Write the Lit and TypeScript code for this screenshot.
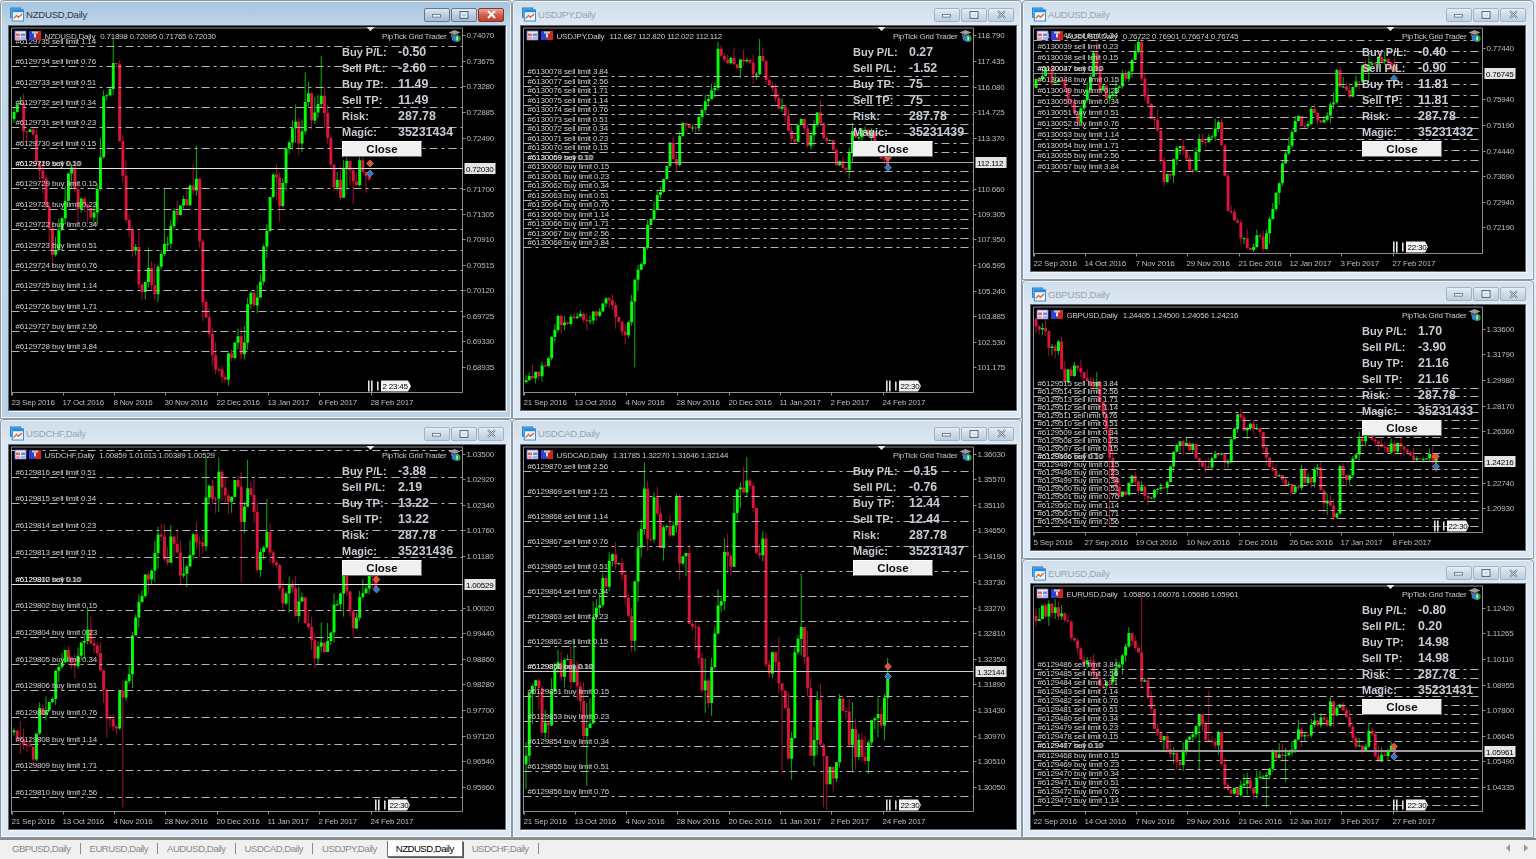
import { LitElement, html, css, svg } from "lit";
import { customElement, property } from "lit/decorators.js";

interface Chart {
  sym: string; ohlc: string; active?: boolean;
  ox: number; oy: number; w: number; h: number;
  keys: string; kx: number; ky: number; ks: number; amp: number; wick: number; seed: number;
  spikes: number[][]; endX: number;
  prices: [string, number][]; cur: [string, number]; curColor: string;
  times: string[];
  first: number; step: number; curIdx: number; labels: string[];
  info: string[]; tagX: number; tagText: string; tri?: boolean;
}

const t1 = "21 Sep 2016,13 Oct 2016,4 Nov 2016,28 Nov 2016,20 Dec 2016,11 Jan 2017,2 Feb 2017,24 Feb 2017".split(",");
const t2 = "22 Sep 2016,14 Oct 2016,7 Nov 2016,29 Nov 2016,21 Dec 2016,12 Jan 2017,3 Feb 2017,27 Feb 2017".split(",");
const pl = (s: string): [string, number][] => s.split(" ").map((p) => { const [a, b] = p.split("@"); return [a, +b] as [string, number]; });

const CHARTS: Record<string, Chart> = {
  NZD: {
    sym: "NZDUSD", ohlc: "0.71898 0.72095 0.71765 0.72030", active: true, curColor: "#e4e4e4",
    ox: 9, oy: 27, w: 496, h: 384, kx: 0, ky: 20, ks: 3, amp: 13, wick: 15, seed: 11, endX: 370,
    keys: "38,300 55,250 80,350 100,350 110,470 130,520 150,680 165,720 190,600 205,450 225,500 245,580 270,580 295,500 305,300 320,210 342,120 352,200 360,400 370,500 380,620 400,680 415,780 430,850 445,750 465,820 480,700 500,640 520,600 545,560 575,480 592,500 600,700 612,880 630,1000 650,1060 665,1090 690,1020 700,950 735,980 745,830 765,900 785,750 800,620 822,430 840,560 860,400 880,280 895,360 920,250 945,280 965,230 985,400 995,480 1025,500 1040,440 1060,520 1080,440 1110,480",
    spikes: [[965, 110], [915, 160], [340, 60], [590, 380], [495, 510]],
    prices: pl("0.74070@36 0.73675@62 0.73280@87 0.72885@113 0.72490@139 0.71700@190 0.71305@215 0.70910@240 0.70515@266 0.70120@291 0.69725@317 0.69330@342 0.68935@368"),
    cur: ["0.72030", 168.5],
    times: "23 Sep 2016,17 Oct 2016,8 Nov 2016,30 Nov 2016,22 Dec 2016,13 Jan 2017,6 Feb 2017,28 Feb 2017".split(","),
    first: 47, step: 20.35, curIdx: 6,
    labels: ["6129735 sell limit 1.14", "6129734 sell limit 0.76", "6129733 sell limit 0.51", "6129732 sell limit 0.34", "6129731 sell limit 0.23", "6129730 sell limit 0.15", "6129719 buy 0.10|6129720 sell 0.10", "6129729 buy limit 0.15", "6129721 buy limit 0.23", "6129722 buy limit 0.34", "6129723 buy limit 0.51", "6129724 buy limit 0.76", "6129725 buy limit 1.14", "6129726 buy limit 1.71", "6129727 buy limit 2.56", "6129728 buy limit 3.84"],
    info: ["-0.50", "-2.60", "11.49", "11.49", "287.78", "35231434"], tagX: 381, tagText: "2 23:45", tri: true,
  },
  JPY: {
    sym: "USDJPY", ohlc: "112.687 112.820 112.022 112.112", curColor: "#a4a4a4",
    ox: 520, oy: 27, w: 495, h: 384, kx: 515, ky: 20, ks: 3, amp: 5.5, wick: 8, seed: 22, endX: 887,
    keys: "22,1090 50,1080 90,1040 108,950 125,900 150,920 175,880 215,910 240,880 270,830 290,850 310,920 325,945 340,880 355,800 375,730 390,640 415,550 440,500 460,380 480,430 500,300 520,330 540,330 570,250 595,200 607,90 625,130 660,130 700,140 715,170 735,105 750,200 770,200 790,260 810,310 835,380 850,280 875,380 905,260 925,380 945,370 965,440 990,440 1010,340 1040,340 1070,350 1100,420 1115,430",
    spikes: [[355, 1045], [22, 1020], [730, 60]],
    prices: pl("118.790@36 117.435@62 116.080@88 114.725@113 113.370@139 110.660@190 109.305@215 107.950@240 106.595@266 105.240@292 103.885@317 102.530@343 101.175@368"),
    cur: ["112.112", 162.5], times: t1,
    first: 77, step: 9.5, curIdx: 9,
    labels: ["6130078 sell limit 3.84", "6130077 sell limit 2.56", "6130076 sell limit 1.71", "6130075 sell limit 1.14", "6130074 sell limit 0.76", "6130073 sell limit 0.51", "6130072 sell limit 0.34", "6130071 sell limit 0.23", "6130070 sell limit 0.15", "6130069 buy 0.10|6130059 sell 0.10", "6130060 buy limit 0.15", "6130061 buy limit 0.23", "6130062 buy limit 0.34", "6130063 buy limit 0.51", "6130064 buy limit 0.76", "6130065 buy limit 1.14", "6130066 buy limit 1.71", "6130067 buy limit 2.56", "6130068 buy limit 3.84"],
    info: ["0.27", "-1.52", "75", "75", "287.78", "35231439"], tagX: 898, tagText: "22:30", tri: true,
  },
  CHF: {
    sym: "USDCHF", ohlc: "1.00859 1.01013 1.00389 1.00529", curColor: "#e8e8e8",
    ox: 9, oy: 446, w: 496, h: 384, kx: 0, ky: 440, ks: 3, amp: 12, wick: 15, seed: 33, endX: 376.5,
    keys: "38,880 55,910 75,910 100,940 120,830 140,790 155,780 170,670 190,660 215,670 240,610 270,590 295,630 310,780 325,880 345,850 370,730 390,690 400,560 415,490 430,420 460,360 470,300 490,320 500,350 520,290 550,420 570,310 590,290 605,340 620,110 640,150 660,130 680,170 710,130 725,290 745,150 765,270 770,380 790,290 810,330 830,380 850,490 870,420 885,550 905,500 945,650 965,620 985,630 1005,490 1030,440 1060,550 1080,450 1110,420 1130,430",
    spikes: [[370, 1105], [265, 505], [745, 62], [620, 55], [725, 430], [802, 180]],
    prices: pl("1.03500@455 1.02920@480 1.02340@506 1.01760@531 1.01180@557 1.00020@609 0.99440@634 0.98860@660 0.98280@685 0.97700@711 0.97120@737 0.96540@762 0.95960@788"),
    cur: ["1.00529", 585], times: t1,
    first: 451, step: 26.7, curIdx: 5,
    labels: ["", "6129816 sell limit 0.51", "6129815 sell limit 0.34", "6129814 sell limit 0.23", "6129813 sell limit 0.15", "6129800 buy 0.10|6129812 sell 0.10", "6129802 buy limit 0.15", "6129804 buy limit 0.23", "6129805 buy limit 0.34", "6129806 buy limit 0.51", "6129807 buy limit 0.76", "6129808 buy limit 1.14", "6129809 buy limit 1.71", "6129810 buy limit 2.56"],
    info: ["-3.88", "2.19", "13.22", "13.22", "287.78", "35231436"], tagX: 388, tagText: "22:30", tri: true,
  },
  CAD: {
    sym: "USDCAD", ohlc: "1.31785 1.32270 1.31646 1.32144", curColor: "#d0d0d0",
    ox: 520, oy: 446, w: 495, h: 384, kx: 515, ky: 440, ks: 3, amp: 20, wick: 20, seed: 44, endX: 887,
    keys: "22,1000 40,780 60,700 75,900 105,800 125,700 150,640 175,720 195,860 222,870 232,560 250,480 280,400 320,400 335,470 345,570 365,300 385,130 395,300 415,180 435,350 460,240 480,220 495,380 510,330 520,570 545,600 560,740 580,850 595,590 608,490 625,380 640,430 655,250 665,150 685,95 700,120 720,320 740,340 750,680 765,660 790,750 810,860 825,980 838,610 850,520 870,660 885,940 905,800 925,1000 945,970 960,1010 970,750 995,820 1005,920 1025,930 1050,920 1075,780 1095,880 1115,720",
    spikes: [[210, 1040], [855, 405], [690, 55], [385, 70], [925, 1105], [30, 1050], [800, 1005]],
    prices: pl("1.36030@455 1.35570@480 1.35110@506 1.34650@531 1.34190@557 1.33730@583 1.33270@609 1.32810@634 1.32350@660 1.31890@685 1.31430@711 1.30970@737 1.30510@762 1.30050@788"),
    cur: ["1.32144", 671.5], times: t1,
    first: 472, step: 24.98, curIdx: 8,
    labels: ["6129870 sell limit 2.56", "6129869 sell limit 1.71", "6129868 sell limit 1.14", "6129867 sell limit 0.76", "6129865 sell limit 0.51", "6129864 sell limit 0.34", "6129863 sell limit 0.23", "6129862 sell limit 0.15", "6129850 buy 0.10|6129861 sell 0.10", "6129851 buy limit 0.15", "6129853 buy limit 0.23", "6129854 buy limit 0.34", "6129855 buy limit 0.51", "6129856 buy limit 0.76"],
    info: ["-0.15", "-0.76", "12.44", "12.44", "287.78", "35231437"], tagX: 898, tagText: "22:30", tri: true,
  },
  AUD: {
    sym: "AUDUSD", ohlc: "0.76722 0.76901 0.76674 0.76745", curColor: "#8c8c8c",
    ox: 1031, oy: 27, w: 494, h: 245, kx: 1025, ky: 20, ks: 3, amp: 7.5, wick: 8, seed: 55, endX: 1394,
    keys: "25,210 60,150 85,190 105,170 130,240 160,300 185,240 205,110 225,200 260,240 290,180 325,140 340,70 350,200 370,260 385,300 400,360 415,510 430,460 465,380 495,460 520,380 550,370 570,340 585,325 600,480 610,570 640,620 665,680 695,670 720,670 735,570 760,510 780,400 800,340 820,280 840,330 860,260 895,320 920,260 935,170 960,210 980,215 1010,155 1040,130 1075,130 1095,160 1105,150",
    spikes: [],
    prices: pl("0.77440@49 0.75940@100 0.75190@126 0.74440@152 0.73690@177 0.72940@203 0.72190@228"),
    cur: ["0.76745", 74], times: t2,
    first: 41, step: 10.95, curIdx: 3,
    labels: ["6130040 sell limit 0.34", "6130039 sell limit 0.23", "6130038 sell limit 0.15", "6130037 buy 0.10|6130047 sell 0.10", "6130048 buy limit 0.15", "6130049 buy limit 0.23", "6130050 buy limit 0.34", "6130051 buy limit 0.51", "6130052 buy limit 0.76", "6130053 buy limit 1.14", "6130054 buy limit 1.71", "6130055 buy limit 2.56", "6130057 buy limit 3.84"],
    info: ["-0.40", "-0.90", "11.81", "11.81", "287.78", "35231432"], tagX: 1406, tagText: "22:30", tri: true,
  },
  GBP: {
    sym: "GBPUSD", ohlc: "1.24405 1.24500 1.24056 1.24216", curColor: "#d8d8d8",
    ox: 1031, oy: 306, w: 494, h: 245, kx: 1025, ky: 300, ks: 2.96, amp: 6, wick: 7, seed: 66, endX: 1436,
    keys: "30,60 60,110 85,150 100,140 112,240 145,210 180,245 215,260 240,350 255,500 280,600 320,530 350,570 395,580 430,520 445,440 480,430 500,440 540,510 570,470 610,470 635,350 665,390 700,370 725,490 780,540 815,570 830,520 860,560 875,480 890,590 935,650 945,490 965,540 985,470 1005,400 1040,420 1070,450 1100,430 1130,450 1160,470 1195,460 1233,470",
    spikes: [[253, 675], [905, 640]],
    prices: pl("1.33600@330 1.31790@355 1.29980@381 1.28170@407 1.26360@432 1.22740@484 1.20930@509"),
    cur: ["1.24216", 462], times: "5 Sep 2016,27 Sep 2016,19 Oct 2016,10 Nov 2016,2 Dec 2016,26 Dec 2016,17 Jan 2017,8 Feb 2017".split(","),
    first: 388.8, step: 8.12, curIdx: 9,
    labels: ["6129515 sell limit 3.84", "6129514 sell limit 2.56", "6129513 sell limit 1.71", "6129512 sell limit 1.14", "6129511 sell limit 0.76", "6129510 sell limit 0.51", "6129509 sell limit 0.34", "6129508 sell limit 0.23", "6129507 sell limit 0.15", "6129496 buy 0.10|6129506 sell 0.10", "6129497 buy limit 0.15", "6129498 buy limit 0.23", "6129499 buy limit 0.34", "6129500 buy limit 0.51", "6129501 buy limit 0.76", "6129502 buy limit 1.14", "6129503 buy limit 1.71", "6129504 buy limit 2.56"],
    info: ["1.70", "-3.90", "21.16", "21.16", "287.78", "35231433"], tagX: 1447, tagText: "22:30",
  },
  EUR: {
    sym: "EURUSD", ohlc: "1.05856 1.06076 1.05686 1.05961", curColor: "#a0a0a0",
    ox: 1031, oy: 585, w: 494, h: 245, kx: 1025, ky: 300, ks: 2.96, amp: 7, wick: 8, seed: 77, endX: 1394,
    keys: "25,940 50,920 80,920 120,950 150,1010 165,1060 190,1080 220,1140 245,1140 270,1100 290,1040 320,990 335,1040 350,1120 370,1170 385,1250 410,1300 425,1330 455,1380 490,1310 520,1240 550,1320 580,1300 600,1430 630,1470 665,1430 690,1450 705,1400 720,1420 745,1340 770,1370 800,1330 820,1260 845,1310 865,1230 900,1270 915,1210 950,1220 975,1280 1005,1330 1035,1290 1060,1370 1085,1350 1105,1330",
    spikes: [[350, 880], [550, 1160], [520, 1395], [722, 1505], [780, 1430]],
    prices: pl("1.12420@609 1.11265@634 1.10110@660 1.08955@686 1.07800@711 1.06645@737 1.05490@762 1.04335@788"),
    cur: ["1.05961", 752], times: t2,
    first: 670, step: 9.05, curIdx: 9,
    labels: ["6129486 sell limit 3.84", "6129485 sell limit 2.56", "6129484 sell limit 1.71", "6129483 sell limit 1.14", "6129482 sell limit 0.76", "6129481 sell limit 0.51", "6129480 sell limit 0.34", "6129479 sell limit 0.23", "6129478 sell limit 0.15", "6129467 buy 0.10|6129477 sell 0.10", "6129468 buy limit 0.15", "6129469 buy limit 0.23", "6129470 buy limit 0.34", "6129471 buy limit 0.51", "6129472 buy limit 0.76", "6129473 buy limit 1.14"],
    info: ["-0.80", "0.20", "14.98", "14.98", "287.78", "35231431"], tagX: 1406, tagText: "22:30", tri: true,
  },
};

const INFO_LABELS = ["Buy P/L:", "Sell P/L:", "Buy TP:", "Sell TP:", "Risk:", "Magic:"];

function rngFrom(seed: number) {
  let a = seed * 2654435 + 1;
  return () => {
    a |= 0; a = (a + 0x6d2b79f5) | 0;
    let t = Math.imul(a ^ (a >>> 15), 1 | a);
    t = (t + Math.imul(t ^ (t >>> 7), 61 | t)) ^ t;
    return ((t ^ (t >>> 14)) >>> 0) / 4294967296;
  };
}

function candlePaths(c: Chart) {
  const rnd = rngFrom(c.seed);
  const pts = c.keys.split(" ").map((p) => {
    const [x, y] = p.split(",").map(Number);
    return [c.kx + x / 3, c.ky + y / c.ks];
  });
  const at = (x: number) => {
    if (x <= pts[0][0]) return pts[0][1];
    for (let i = 1; i < pts.length; i++) {
      if (x <= pts[i][0]) {
        const f = (x - pts[i - 1][0]) / (pts[i][0] - pts[i - 1][0]);
        return pts[i - 1][1] + f * (pts[i][1] - pts[i - 1][1]);
      }
    }
    return pts[pts.length - 1][1];
  };
  const left = c.ox + 3;
  const top = c.oy + 3;
  const bottom = c.oy + c.h - 19;
  const spikes = c.spikes.map(([x, y]) => [c.kx + x / 3, c.ky + y / c.ks]);
  let g = "", r = "", gw = "", rw = "";
  let prev = at(left);
  const step = 3.2;
  for (let x = left + 0.6; x <= c.endX + 0.1; x += step) {
    const cl = at(x + 1.2) + (rnd() - 0.5) * 2 * c.amp;
    const o = prev;
    const up = cl < o;
    let yt = Math.min(o, cl);
    let yb = Math.max(o, cl);
    if (yb - yt < 1) yb = yt + 1;
    let hi = yt - rnd() * rnd() * c.wick * 1.6;
    let lo = yb + rnd() * rnd() * c.wick * 1.6;
    for (const [sx, sy] of spikes) {
      if (Math.abs(sx - (x + 1.2)) <= 1.6) {
        if (sy < hi) hi = sy;
        if (sy > lo) lo = sy;
      }
    }
    hi = Math.max(hi, top); lo = Math.min(lo, bottom);
    yt = Math.max(yt, top); yb = Math.min(yb, bottom);
    const wick = `M${(x + 1.4).toFixed(1)} ${hi.toFixed(1)}V${lo.toFixed(1)}`;
    const body = `M${x.toFixed(1)} ${yt.toFixed(1)}h2.9V${yb.toFixed(1)}h-2.9z`;
    if (up) { gw += wick; g += body; } else { rw += wick; r += body; }
    prev = cl;
  }
  return { g, r, gw, rw };
}

@customElement("mt-window")
class MtWindow extends LitElement {
  @property({ attribute: false }) chart!: Chart;

  static styles = css`
    :host { display: block; height: 100%; }
    .win {
      height: 100%; box-sizing: border-box; display: flex; flex-direction: column;
      background: linear-gradient(#cfdeeb, #dfe9f3 27px, #dce8f3);
      border: 1px solid #8b98a3; border-radius: 4px 4px 0 0;
      box-shadow: inset 0 0 0 1px #eef4f9;
    }
    .win.active { background: linear-gradient(#a6c4de, #c2d6e8 27px, #bad1e5); }
    .bar { flex: 1; display: flex; align-items: center; padding: 2px 7px 0 9px; min-height: 0; }
    .title {
      font: 9.6px "Liberation Sans", sans-serif; letter-spacing: -0.25px;
      color: #98a5b2; margin-left: 2px; white-space: nowrap;
    }
    .active .title { color: #2b3b4c; }
    .btns { margin-left: auto; display: flex; gap: 1px; }
    .btn {
      width: 26px; height: 14px; box-sizing: border-box; border: 1px solid #a4b3c1; border-radius: 2px;
      background: linear-gradient(#e6eef5, #ccdbe8 50%, #bdd0e0); display: flex; align-items: center; justify-content: center;
    }
    .active .btn { border-color: #66788a; background: linear-gradient(#dde8f2, #b9cde0 50%, #a4bcd3); }
    .active .btn.x { border-color: #7d3a30; background: linear-gradient(#eba597, #d35f4e 50%, #c23f2f); }
    .frame {
      position: relative; background: #000; flex: none; margin-bottom: 8px;
      box-shadow: 0 0 0 1px #5d6a75, 1px 1px 0 1px #f5f8fb;
    }
    svg.chart { display: block; filter: blur(0.28px); }
    .ord { font: 8px "Liberation Sans", sans-serif; letter-spacing: -0.15px; fill: #cfcfcf; }
    .hdr { font: 8px "Liberation Sans", sans-serif; letter-spacing: -0.22px; fill: #c8c8c8; }
    .axis { font: 8px "Liberation Sans", sans-serif; letter-spacing: -0.2px; fill: #bcbcbc; }
    .tag { font: 8px "Liberation Sans", sans-serif; letter-spacing: -0.2px; fill: #000; }
    .info {
      position: absolute; display: grid; grid-template-columns: 56px auto; grid-auto-rows: 16px;
      align-items: center; font: bold 11px/16px "Liberation Sans", sans-serif; color: #c6ccd4; white-space: nowrap;
      filter: blur(0.25px);
    }
    .val { font-size: 12.4px; }
    .close {
      grid-column: 1 / 3; margin-top: 1px; width: 80px; height: 16px; box-sizing: border-box; padding: 0;
      background: #f0f0f0; border: 1px solid; border-color: #fff #6e6e6e #6e6e6e #fff;
      font: bold 11.5px "Liberation Sans", sans-serif; color: #0c0c0c; text-align: center; line-height: 14px;
    }
  `;

  private winIcon() {
    return html`<svg width="14" height="15" viewBox="0 0 15 15">
      <rect x="0.5" y="0.5" width="11" height="10" fill="#5fb0ea" stroke="#1f7fd0"></rect>
      <rect x="2.5" y="2.5" width="12" height="12" fill="#eaf5fc" stroke="#2a8bd8"></rect>
      <rect x="2.5" y="2.5" width="12" height="2.5" fill="#2a8bd8"></rect>
      <path d="M4 12 L7 8.5 L9 10.5 L13 7" fill="none" stroke="#e8601c" stroke-width="1.3"></path>
    </svg>`;
  }

  private chartSvg() {
    const c = this.chart;
    const pL = c.ox + 3 - 0.5;
    const pR = c.ox + c.w - 42.5;
    const pT = c.oy + 2;
    const pB = c.oy + c.h - 17.5;
    const p = candlePaths(c);
    const lines = c.labels.map((l, i) => {
      const y = Math.round(c.first + i * c.step) + 0.5;
      const isCur = i === c.curIdx;
      return svg`
        <line x1=${pL} x2=${pR} y1=${y} y2=${y} stroke=${isCur ? "#9a9a9a" : "#b4b4b4"} stroke-dasharray=${isCur ? "none" : "8 4 3 4"}></line>
        ${l ? l.split("|").map((t) => svg`<text class="ord" x=${pL + 4} y=${y - 3}>#${t}</text>`) : ""}`;
    });
    const cy = Math.round(c.cur[1]) + 0.5;
    const tagY = pB - 12;
    return svg`<svg class="chart" width=${c.w} height=${c.h} viewBox="${c.ox} ${c.oy} ${c.w} ${c.h}">
      <path d=${p.gw} stroke="#0cae0c" stroke-width="1" fill="none"></path>
      <path d=${p.rw} stroke="#a01034" stroke-width="1" fill="none"></path>
      <path d=${p.g} fill="#00ff00"></path>
      <path d=${p.r} fill="#dc143c"></path>
      ${lines}
      <path d="M${pL} ${pT}H${pR}M${pL} ${pT}V${pB + 3}M${pL} ${pB}H${pR}M${pR} ${pT}V${pB}" stroke="#8c8c8c" fill="none"></path>
      <line x1=${pL} x2=${pR} y1=${cy} y2=${cy} stroke=${c.curColor}></line>
      ${c.times.map((t, i) => {
        const x = Math.round(pL + i * 51.3) + 0.5;
        return svg`<line x1=${x} x2=${x} y1=${pB} y2=${pB + 3} stroke="#8c8c8c"></line>
          <text class="axis" x=${x - 1} y=${pB + 12}>${t}</text>`;
      })}
      ${c.prices.map(([t, y]) => svg`
        <line x1=${pR} x2=${pR + 3} y1=${Math.round(y) + 0.5} y2=${Math.round(y) + 0.5} stroke="#8c8c8c"></line>
        <text class="axis" x=${pR + 4} y=${y + 3}>${t}</text>`)}
      <rect x=${pR + 2} y=${cy - 5.5} width="31" height="11" fill="#e4e4e4"></rect>
      <text class="tag" x=${pR + 3.5} y=${cy + 3}>${c.cur[0]}</text>

      <g transform="translate(${pL + 3.5} ${c.oy + 5})">
        <rect width="11" height="9" fill="#efe8f4" stroke="#6a6ad0" stroke-width="0.8"></rect>
        <rect x="1" y="2.5" width="4" height="2.6" fill="#d86a6a"></rect><rect x="6" y="2.5" width="4" height="2.6" fill="#6a8ae0"></rect>
        <rect x="1" y="6" width="4" height="2.2" fill="#e8a0a0"></rect><rect x="6" y="6" width="4" height="2.2" fill="#a0b4ee"></rect>
        <rect x="14" width="6" height="9" fill="#2c3fd8"></rect><rect x="20" width="6" height="9" fill="#c82820"></rect>
        <rect x="17" y="0.5" width="6" height="2" fill="#c8c8c8"></rect><rect x="19" y="2.5" width="2" height="4" fill="#dcdcdc"></rect>
      </g>
      <text class="hdr" x=${pL + 33} y=${c.oy + 12.5}>${c.sym},Daily<tspan dx="5">${c.ohlc}</tspan></text>
      ${c.tri ? svg`<path d="M${pR - 96} ${c.oy + 1}h8l-4 4z" fill="#e8e8e8"></path>` : ""}
      <text class="hdr" text-anchor="end" x=${pR - 16} y=${c.oy + 12.5}>PipTick Grid Trader</text>
      <g transform="translate(${pR - 14} ${c.oy + 3})">
        <path d="M0 3.5L6 1l6 2.5L6 6z" fill="#9a9a9a"></path>
        <path d="M2.5 5v2.5q3.5 2 7 0V5L6 6.5z" fill="#6c6c6c"></path>
        <circle cx="8.5" cy="9.5" r="3.6" fill="#22a04a"></circle>
        <circle cx="5.5" cy="9.5" r="2.4" fill="#2f7fd8"></circle>
        <rect x="8" y="7.5" width="1.2" height="4" fill="#fff"></rect>
      </g>

      <path d="M${c.endX} ${cy - 8.5}l3.4 3.5l-3.4 3.5l-3.4 -3.5z" fill="#e8502a" stroke="#f6d0c0" stroke-width="0.4"></path>
      <path d="M${c.endX} ${cy + 1.5}l3.4 3.5l-3.4 3.5l-3.4 -3.5z" fill="#2a78c8" stroke="#cfe4f6" stroke-width="0.4"></path>

      <g transform="translate(${c.tagX} ${tagY})">
        <path d=${c.tagText.length > 5 ? "M0 0h27l3 5.5l-3 5.5h-27z" : "M0 0h19l3 5.5l-3 5.5h-19z"} fill="#f2f2f2"></path>
        <text class="tag" x="1.5" y="8.3">${c.tagText}</text>
        <rect x="-4" y="1" width="1.6" height="9" fill="#dcdcdc"></rect>
        <rect x="-13" y="0" width="1.6" height="11" fill="#cfe8ee"></rect>
        <rect x="-10" y="0" width="1.6" height="11" fill="#e8e8e8"></rect>
      </g>
    </svg>`;
  }

  render() {
    const c = this.chart;
    const infoL = c.w - 163;
    return html`<div class="win ${c.active ? "active" : ""}">
      <div class="bar">
        ${this.winIcon()}
        <span class="title">${c.sym},Daily</span>
        <div class="btns">
          <div class="btn"><svg width="10" height="6" viewBox="0 0 10 6"><rect x="0.5" y="2.5" width="8" height="2.6" fill="#eef3f7" stroke="#5f6f7d" stroke-width="0.8"></rect></svg></div>
          <div class="btn"><svg width="10" height="8" viewBox="0 0 10 8"><rect x="1" y="0.5" width="8" height="7" fill="none" stroke="#5f6f7d"></rect><rect x="2.4" y="2.2" width="5.2" height="3.6" fill="none" stroke="#eef3f7"></rect></svg></div>
          <div class="btn x"><svg width="11" height="9" viewBox="0 0 11 9"><path d="M2 1l7 7M9 1l-7 7" stroke=${c.active ? "#fff" : "#6d7c8a"} stroke-width="2" fill="none"></path>${c.active ? "" : svg`<path d="M2 1l7 7M9 1l-7 7" stroke="#e8eef4" stroke-width="0.8" fill="none"></path>`}</svg></div>
        </div>
      </div>
      <div class="frame" style="width:${c.w}px;height:${c.h}px;margin-left:8px">
        ${this.chartSvg()}
        <div class="info" style="left:${infoL}px;top:18px">
          ${INFO_LABELS.map((l, i) => html`<span>${l}</span><span class="val">${c.info[i]}</span>`)}
          <div class="close">Close</div>
        </div>
      </div>
    </div>`;
  }
}

@customElement("app-root")
class AppRoot extends LitElement {
  static styles = css`
    :host { display: flex; flex-direction: column; width: 1536px; height: 859px; background: #e4ecf3; overflow: hidden; }
    .desk { display: grid; grid-template-columns: 512px 510px 512px; height: 838px; flex: none; }
    .col { display: grid; min-height: 0; }
    .two { grid-template-rows: 419px 419px; }
    .three { grid-template-rows: 280px 279px 279px; }
    .tabs {
      flex: 1; display: flex; align-items: flex-start; padding: 1px 0 0 3px; background: #f0f0f0;
      border-top: 2px solid #8a8a8a; box-sizing: border-box;
      font: 9.6px/15px "Liberation Sans", sans-serif; letter-spacing: -0.5px; color: #8a8a8a;
    }
    .tab { padding: 0 10px 0 9px; height: 15px; white-space: nowrap; position: relative; }
    .tab::after { content: ""; position: absolute; right: 0; top: 2px; bottom: 2px; width: 1px; background: #8a8a8a; }
    .tab.nosep::after { display: none; }
    .tab.on {
      background: #fff; color: #000; border: 1px solid #777; border-top: none; box-shadow: 1px 1px 0 #555;
      padding: 0 8px; height: 15px;
    }
    .tab.on::after { display: none; }
    .arrows { margin-left: auto; display: flex; gap: 10px; padding: 3px 7px 0 0; }
  `;

  render() {
    const tabs = ["GBPUSD", "EURUSD", "AUDUSD", "USDCAD", "USDJPY", "NZDUSD", "USDCHF"];
    return html`
      <div class="desk">
        <div class="col two"><mt-window .chart=${CHARTS.NZD}></mt-window><mt-window .chart=${CHARTS.CHF}></mt-window></div>
        <div class="col two"><mt-window .chart=${CHARTS.JPY}></mt-window><mt-window .chart=${CHARTS.CAD}></mt-window></div>
        <div class="col three"><mt-window .chart=${CHARTS.AUD}></mt-window><mt-window .chart=${CHARTS.GBP}></mt-window><mt-window .chart=${CHARTS.EUR}></mt-window></div>
      </div>
      <div class="tabs">
        ${tabs.map((t, i) => html`<div class="tab ${t === "NZDUSD" ? "on" : ""} ${i === 4 ? "nosep" : ""}">${t},Daily</div>`)}
        <div class="arrows">
          <svg width="7" height="8" viewBox="0 0 7 8"><path d="M5 0L1 4l4 4z" fill="#9a9a9a"></path></svg>
          <svg width="7" height="8" viewBox="0 0 7 8"><path d="M2 0l4 4l-4 4z" fill="#9a9a9a"></path></svg>
        </div>
      </div>`;
  }
}
